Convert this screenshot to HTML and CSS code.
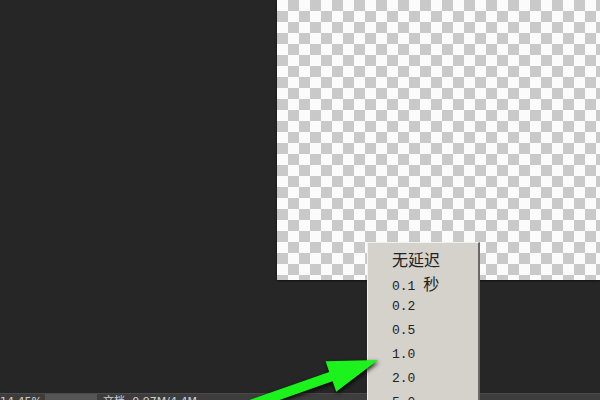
FILE: index.html
```html
<!DOCTYPE html>
<html lang="zh-CN">
<head>
<meta charset="utf-8">
<title>动画帧延迟</title>
<link rel="stylesheet" href="styles.css">
</head>
<body>
<div class="workspace">
  <div class="canvas-area">
    <div class="doc"></div>
  </div>
  <div class="statusbar">
    <span class="zoom">14.45%</span>
    <span class="slider"></span>
    <span class="info">文档: 0.97M/4.4M</span>
  </div>
</div>

<ul class="delay-menu">
  <li class="cjk">无延迟</li>
  <li>0.1 <span class="cjk">秒</span></li>
  <li>0.2</li>
  <li>0.5</li>
  <li>1.0</li>
  <li>2.0</li>
  <li>5.0</li>
</ul>

<svg class="arrow" width="600" height="400" viewBox="0 0 600 400">
  <polygon fill="#1cf21c" points="378,360 325.6,361.3 329.2,371.9 234.9,405.1 238.3,414.5 332.6,381.3 336.2,391.7"/>
</svg>
</body>
</html>
```

FILE: styles.css
```css
html, body {
  margin: 0;
  padding: 0;
  width: 600px;
  height: 400px;
  overflow: hidden;
  background: #262626;
}

.workspace {
  display: flex;
  flex-direction: column;
  width: 600px;
  height: 400px;
}

.canvas-area {
  height: 393px;
  flex: none;
  display: flex;
  justify-content: flex-end;
  align-items: flex-start;
}

.doc {
  width: 323px;
  height: 280px;
  background-color: #fbfbfb;
  background-image:
    linear-gradient(45deg, #c9c9c9 25%, transparent 25%, transparent 75%, #c9c9c9 75%),
    linear-gradient(45deg, #c9c9c9 25%, transparent 25%, transparent 75%, #c9c9c9 75%);
  background-size: 22px 22px;
  background-position: 0 0, 11px 11px;
  box-shadow: 0 1px 2px rgba(0, 0, 0, 0.6);
}

.statusbar {
  flex: none;
  height: 20px;
  display: flex;
  align-items: flex-start;
  background: #3d3d3d;
  border-top: 1px solid #4a4a4a;
  font-family: "DejaVu Sans", "Noto Sans CJK SC", sans-serif;
  font-size: 11px;
  line-height: 14px;
  color: #d0d0d0;
}

.zoom {
  width: 45px;
  padding-top: 1px;
}

.slider {
  width: 52px;
  height: 20px;
  background: #555555;
}

.info {
  padding-left: 6px;
  padding-top: 1px;
}

.delay-menu {
  position: absolute;
  left: 367px;
  top: 242px;
  width: 110px;
  margin: 0;
  padding: 4px 0 0 0;
  list-style: none;
  background: #d5d2cc;
  border-top: 1px solid #f2f0ec;
  border-left: 1px solid #f2f0ec;
  border-right: 2px solid #6a6864;
  height: 170px;
  font-family: "Liberation Mono", "Noto Sans CJK SC", monospace;
  font-size: 13px;
  color: #222222;
}

.delay-menu li {
  height: 24px;
  line-height: 24px;
  padding-left: 24px;
}

.delay-menu .cjk {
  font-family: "Noto Sans CJK SC", sans-serif;
  font-size: 16px;
}

.arrow {
  position: absolute;
  left: 0;
  top: 0;
  pointer-events: none;
  filter: drop-shadow(1px 2px 2px rgba(0, 0, 0, 0.85));
}
```
